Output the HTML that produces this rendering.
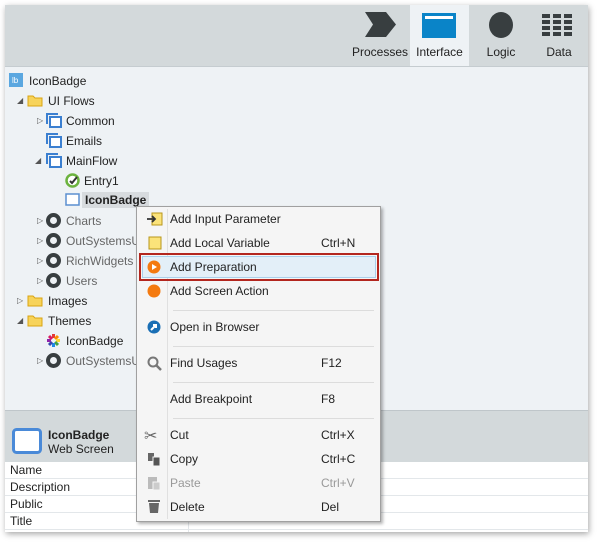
<!DOCTYPE html>
<html><head><style>
*{margin:0;padding:0;box-sizing:border-box}
body{width:603px;height:547px;background:#fff;font-family:"Liberation Sans",sans-serif;font-size:12px;color:#222;position:relative;overflow:hidden}
.win{position:absolute;left:5px;top:5px;width:583px;height:527px;box-shadow:1px 2px 6px rgba(0,0,0,.35);background:#fff}
.top{position:absolute;left:0;top:0;width:583px;height:61px;background:#d3d9db}
.tab{position:absolute;top:0;height:61px;text-align:center;font-size:12px}
.tab span{position:absolute;left:0;right:0;top:40px}
.tree{position:absolute;left:0;top:61px;width:583px;height:344px;background:#eef2f5;border-top:1px solid #c5ccd0}
.t{position:absolute;white-space:nowrap;font-size:12px}
.g{color:#666}
.arr{position:absolute;font-size:8px;color:#555}
.hdr{position:absolute;left:0;top:405px;width:583px;height:52px;background:#d3d9db;border-top:1px solid #bfc6ca}
.props{position:absolute;left:0;top:457px;width:583px;height:70px;background:#fff}
.row{height:17px;border-bottom:1px solid #e3e7ea;padding-left:5px;line-height:16px;position:relative}
.menu{position:absolute;left:136px;top:206px;width:245px;height:316px;background:#f5f5f5;border:1px solid #a0a0a0;box-shadow:2px 2px 3px rgba(0,0,0,.3)}
.menu .col{position:absolute;left:30px;top:2px;bottom:2px;border-left:1px solid #e0e0e0}
.mi{position:absolute;left:33px;font-size:12px}
.sc{position:absolute;left:184px;font-size:12px}
.sep{position:absolute;left:36px;right:6px;height:1px;background:#dcdcdc}
.ic{position:absolute;left:10px}
</style></head><body>
<div class="win">
 <div class="top">
  <div class="tab" style="left:345px;width:60px"><svg style="position:absolute;left:15px;top:7px" width="32" height="25"><polygon points="0,0 21,0 31,12.5 21,25 0,25 8,12.5" fill="#383e40"/></svg><span>Processes</span></div>
  <div class="tab" style="left:405px;width:59px;background:#eef2f5;height:62px"><svg style="position:absolute;left:12px;top:8px" width="34" height="25"><rect width="34" height="25" fill="#0a84c8"/><rect x="3" y="3" width="28" height="3" fill="#fff"/></svg><span>Interface</span></div>
  <div class="tab" style="left:467px;width:58px"><svg style="position:absolute;left:16px;top:7px" width="26" height="26"><ellipse cx="13" cy="13" rx="12" ry="13" fill="#383e40"/></svg><span>Logic</span></div>
  <div class="tab" style="left:525px;width:58px"><svg style="position:absolute;left:12px;top:9px" width="30" height="22"><g fill="#383e40"><rect x="0" y="0" width="8" height="4"/><rect x="11" y="0" width="8" height="4"/><rect x="22" y="0" width="8" height="4"/><rect x="0" y="6" width="8" height="4"/><rect x="11" y="6" width="8" height="4"/><rect x="22" y="6" width="8" height="4"/><rect x="0" y="12" width="8" height="4"/><rect x="11" y="12" width="8" height="4"/><rect x="22" y="12" width="8" height="4"/><rect x="0" y="18" width="8" height="4"/><rect x="11" y="18" width="8" height="4"/><rect x="22" y="18" width="8" height="4"/></g></svg><span>Data</span></div>
 </div>
 <div class="tree">
  <svg style="position:absolute;left:4px;top:6px" width="14" height="14"><rect width="14" height="14" fill="#5aa7e0"/><text x="3" y="10" font-size="8" fill="#fff">lb</text></svg>
  <div class="t" style="left:24px;top:7px">IconBadge</div>
  <div class="arr" style="left:12px;top:29px">◢</div><svg style="position:absolute;left:22px;top:27px" width="17" height="13"><path d="M1,2h5l2,2h7v8H1z" fill="#f7d35a" stroke="#d9a412"/></svg><div class="t" style="left:43px;top:27px">UI Flows</div>
  <div class="arr" style="left:32px;top:49px">▷</div><svg style="position:absolute;left:41px;top:46px" width="16" height="15"><path d="M1,11V1h11" fill="none" stroke="#3b7fd0" stroke-width="2"/><rect x="4" y="4" width="11" height="10" fill="#fff" stroke="#3b7fd0" stroke-width="2"/></svg><div class="t" style="left:61px;top:47px">Common</div>
  <svg style="position:absolute;left:41px;top:66px" width="16" height="15"><path d="M1,11V1h11" fill="none" stroke="#3b7fd0" stroke-width="2"/><rect x="4" y="4" width="11" height="10" fill="#fff" stroke="#3b7fd0" stroke-width="2"/></svg><div class="t" style="left:61px;top:67px">Emails</div>
  <div class="arr" style="left:30px;top:89px">◢</div><svg style="position:absolute;left:41px;top:86px" width="16" height="15"><path d="M1,11V1h11" fill="none" stroke="#3b7fd0" stroke-width="2"/><rect x="4" y="4" width="11" height="10" fill="#fff" stroke="#3b7fd0" stroke-width="2"/></svg><div class="t" style="left:61px;top:87px">MainFlow</div>
  <svg style="position:absolute;left:60px;top:106px" width="15" height="15"><circle cx="7.5" cy="7.5" r="6" fill="#fff" stroke="#6cb33f" stroke-width="2.5"/><path d="M5,8l2,2l5,-6" stroke="#333" stroke-width="2" fill="none"/></svg><div class="t" style="left:79px;top:107px">Entry1</div>
  <svg style="position:absolute;left:60px;top:126px" width="15" height="13"><rect x="1" y="1" width="13" height="11" fill="#fff" stroke="#5b8fd0" stroke-width="1.5"/></svg><div class="t" style="left:77px;top:125px;background:#d7dbde;padding:1px 3px;font-weight:bold">IconBadge</div>
  <div class="arr" style="left:32px;top:149px">▷</div><svg style="position:absolute;left:41px;top:146px" width="15" height="15"><circle cx="7.5" cy="7.5" r="5.5" fill="none" stroke="#383e40" stroke-width="4"/></svg><div class="t g" style="left:61px;top:147px">Charts</div>
  <div class="arr" style="left:32px;top:169px">▷</div><svg style="position:absolute;left:41px;top:166px" width="15" height="15"><circle cx="7.5" cy="7.5" r="5.5" fill="none" stroke="#383e40" stroke-width="4"/></svg><div class="t g" style="left:61px;top:167px">OutSystemsU</div>
  <div class="arr" style="left:32px;top:189px">▷</div><svg style="position:absolute;left:41px;top:186px" width="15" height="15"><circle cx="7.5" cy="7.5" r="5.5" fill="none" stroke="#383e40" stroke-width="4"/></svg><div class="t g" style="left:61px;top:187px">RichWidgets</div>
  <div class="arr" style="left:32px;top:209px">▷</div><svg style="position:absolute;left:41px;top:206px" width="15" height="15"><circle cx="7.5" cy="7.5" r="5.5" fill="none" stroke="#383e40" stroke-width="4"/></svg><div class="t g" style="left:61px;top:207px">Users</div>
  <div class="arr" style="left:12px;top:229px">▷</div><svg style="position:absolute;left:22px;top:227px" width="17" height="13"><path d="M1,2h5l2,2h7v8H1z" fill="#f7d35a" stroke="#d9a412"/></svg><div class="t" style="left:43px;top:227px">Images</div>
  <div class="arr" style="left:12px;top:249px">◢</div><svg style="position:absolute;left:22px;top:247px" width="17" height="13"><path d="M1,2h5l2,2h7v8H1z" fill="#f7d35a" stroke="#d9a412"/></svg><div class="t" style="left:43px;top:247px">Themes</div>
  <svg style="position:absolute;left:41px;top:266px" width="15" height="15"><g stroke-width="3"><path d="M7.5,1v4" stroke="#e53935"/><path d="M12,3l-3,3" stroke="#fb8c00"/><path d="M14,7.5h-4" stroke="#fdd835"/><path d="M12,12l-3,-3" stroke="#43a047"/><path d="M7.5,14v-4" stroke="#1e88e5"/><path d="M3,12l3,-3" stroke="#3949ab"/><path d="M1,7.5h4" stroke="#8e24aa"/><path d="M3,3l3,3" stroke="#d81b60"/></g></svg><div class="t" style="left:61px;top:267px">IconBadge</div>
  <div class="arr" style="left:32px;top:289px">▷</div><svg style="position:absolute;left:41px;top:286px" width="15" height="15"><circle cx="7.5" cy="7.5" r="5.5" fill="none" stroke="#383e40" stroke-width="4"/></svg><div class="t g" style="left:61px;top:287px">OutSystemsU</div>
 </div>
 <div class="hdr">
  <svg style="position:absolute;left:7px;top:17px" width="30" height="26"><rect x="1.5" y="1.5" width="27" height="23" rx="3" fill="#fff" stroke="#4a8ad8" stroke-width="3"/></svg>
  <div class="t" style="left:43px;top:17px;font-weight:bold">IconBadge</div>
  <div class="t" style="left:43px;top:31px">Web Screen</div>
 </div>
 <div class="props">
  <div class="row">Name</div><div class="row">Description</div><div class="row">Public</div><div class="row">Title</div>
  <div style="position:absolute;left:183px;top:0;bottom:0;border-left:1px solid #e3e7ea"></div>
 </div>
</div>
<div class="menu">
 <div class="col"></div>
 <svg class="ic" style="top:5px" width="16" height="14"><rect x="5" y="1" width="10" height="12" fill="#fbe37a" stroke="#b8961a"/><path d="M0,7h8M5,4l3,3l-3,3" stroke="#333" stroke-width="1.8" fill="none"/></svg><div class="mi" style="top:5px">Add Input Parameter</div>
 <svg class="ic" style="top:29px" width="16" height="14"><rect x="2" y="1" width="12" height="12" fill="#fbe37a" stroke="#b8961a"/></svg><div class="mi" style="top:29px">Add Local Variable</div><div class="sc" style="top:29px">Ctrl+N</div>
 <div style="position:absolute;left:2px;top:46px;width:240px;height:28px;border:2px solid #b3261e"><div style="position:absolute;inset:1px;background:#e3eff8;border:1px solid #a8d0ec"></div></div>
 <svg class="ic" style="top:53px" width="14" height="14"><circle cx="7" cy="7" r="6.5" fill="#f47a10"/><path d="M5,4l5,3l-5,3z" fill="#fff"/></svg><div class="mi" style="top:53px">Add Preparation</div>
 <svg class="ic" style="top:77px" width="14" height="14"><circle cx="7" cy="7" r="6.5" fill="#f47a10"/></svg><div class="mi" style="top:77px">Add Screen Action</div>
 <div class="sep" style="top:103px"></div>
 <svg class="ic" style="top:113px" width="14" height="14"><circle cx="7" cy="7" r="6.5" fill="#1a6fb5"/><path d="M4,10l5,-5M6,5h3v3" stroke="#fff" stroke-width="2" fill="none"/></svg><div class="mi" style="top:113px">Open in Browser</div>
 <div class="sep" style="top:139px"></div>
 <svg class="ic" style="top:149px" width="15" height="15"><circle cx="6" cy="6" r="4.5" fill="none" stroke="#777" stroke-width="2"/><path d="M9,9l5,5" stroke="#777" stroke-width="2.5"/></svg><div class="mi" style="top:149px">Find Usages</div><div class="sc" style="top:149px">F12</div>
 <div class="sep" style="top:175px"></div>
 <div class="mi" style="top:185px">Add Breakpoint</div><div class="sc" style="top:185px">F8</div>
 <div class="sep" style="top:211px"></div>
 <div class="ic" style="top:219px;color:#666;font-size:16px;left:7px">✂</div><div class="mi" style="top:221px">Cut</div><div class="sc" style="top:221px">Ctrl+X</div>
 <svg class="ic" style="top:245px" width="14" height="14"><rect x="1" y="1" width="6" height="8" fill="#666"/><rect x="6" y="5" width="7" height="9" fill="#555" stroke="#f5f5f5"/></svg><div class="mi" style="top:245px">Copy</div><div class="sc" style="top:245px">Ctrl+C</div>
 <svg class="ic" style="top:268px" width="14" height="15"><rect x="1" y="2" width="9" height="12" fill="#bbb"/><rect x="6" y="7" width="7" height="8" fill="#ccc" stroke="#f5f5f5"/></svg><div class="mi" style="top:269px;color:#999">Paste</div><div class="sc" style="top:269px;color:#999">Ctrl+V</div>
 <svg class="ic" style="top:292px" width="14" height="15"><rect x="1" y="1" width="12" height="2" fill="#666"/><path d="M2,4h10l-1,10H3z" fill="#666"/></svg><div class="mi" style="top:293px">Delete</div><div class="sc" style="top:293px">Del</div>
</div>
</body></html>
